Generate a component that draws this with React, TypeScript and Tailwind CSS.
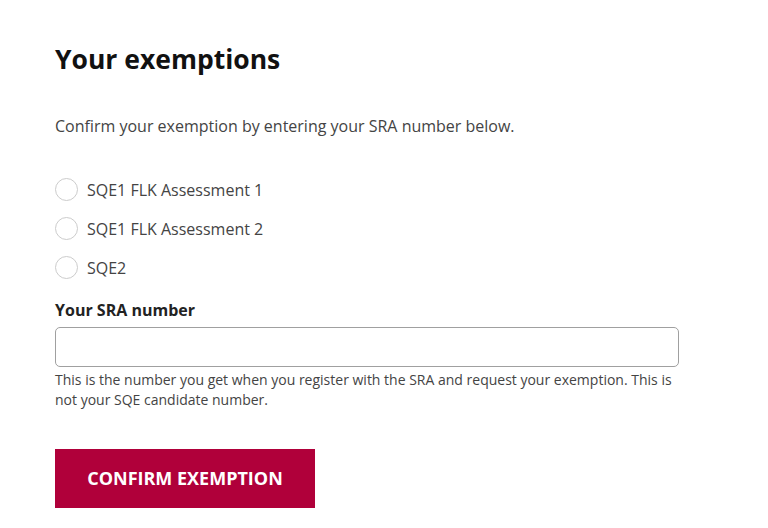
import React, { useState } from 'react';

const options = ['SQE1 FLK Assessment 1', 'SQE1 FLK Assessment 2', 'SQE2'];

const App = () => {
    const [selected, setSelected] = useState<string | null>(null);
    const [sra, setSra] = useState('');

    return (
        <div className="min-h-screen bg-white text-[#333] px-[55px] pt-[41px]" style={{ fontFamily: '"Open Sans", sans-serif' }}>
            <h1 className="text-[26.5px] font-bold text-[#111] leading-[36px]">Your exemptions</h1>
            <p className="mt-[38px] text-[16px] leading-[22px] text-[#444]">Confirm your exemption by entering your SRA number below.</p>

            <div className="mt-[41px] flex flex-col gap-[16px]">
                {options.map(o => (
                    <label key={o} className="flex items-center gap-[9px] cursor-pointer h-[23px]" onClick={() => setSelected(o)}>
                        <span className={`w-[23px] h-[23px] rounded-full border ${selected === o ? 'border-[#b0003a] border-[6px]' : 'border-[#ccc]'} bg-white`}></span>
                        <span className="text-[16px] text-[#444]">{o}</span>
                    </label>
                ))}
            </div>

            <label className="block mt-[20px] text-[16px] font-bold text-[#222] leading-[22px]">Your SRA number</label>
            <input
                value={sra}
                onChange={e => setSra(e.target.value)}
                className="mt-[6px] block w-[624px] h-[40px] border border-[#a0a0a0] rounded-[5px] px-3 text-[15px] outline-none"
            />
            <p className="mt-[3px] w-[630px] text-[14px] leading-[20px] text-[#444]">
                This is the number you get when you register with the SRA and request your exemption. This is not your SQE candidate number.
            </p>

            <button className="mt-[39px] w-[260px] h-[59px] bg-[#b0003a] text-white text-[18px] font-bold">
                CONFIRM EXEMPTION
            </button>
        </div>
    );
};

export default App;
